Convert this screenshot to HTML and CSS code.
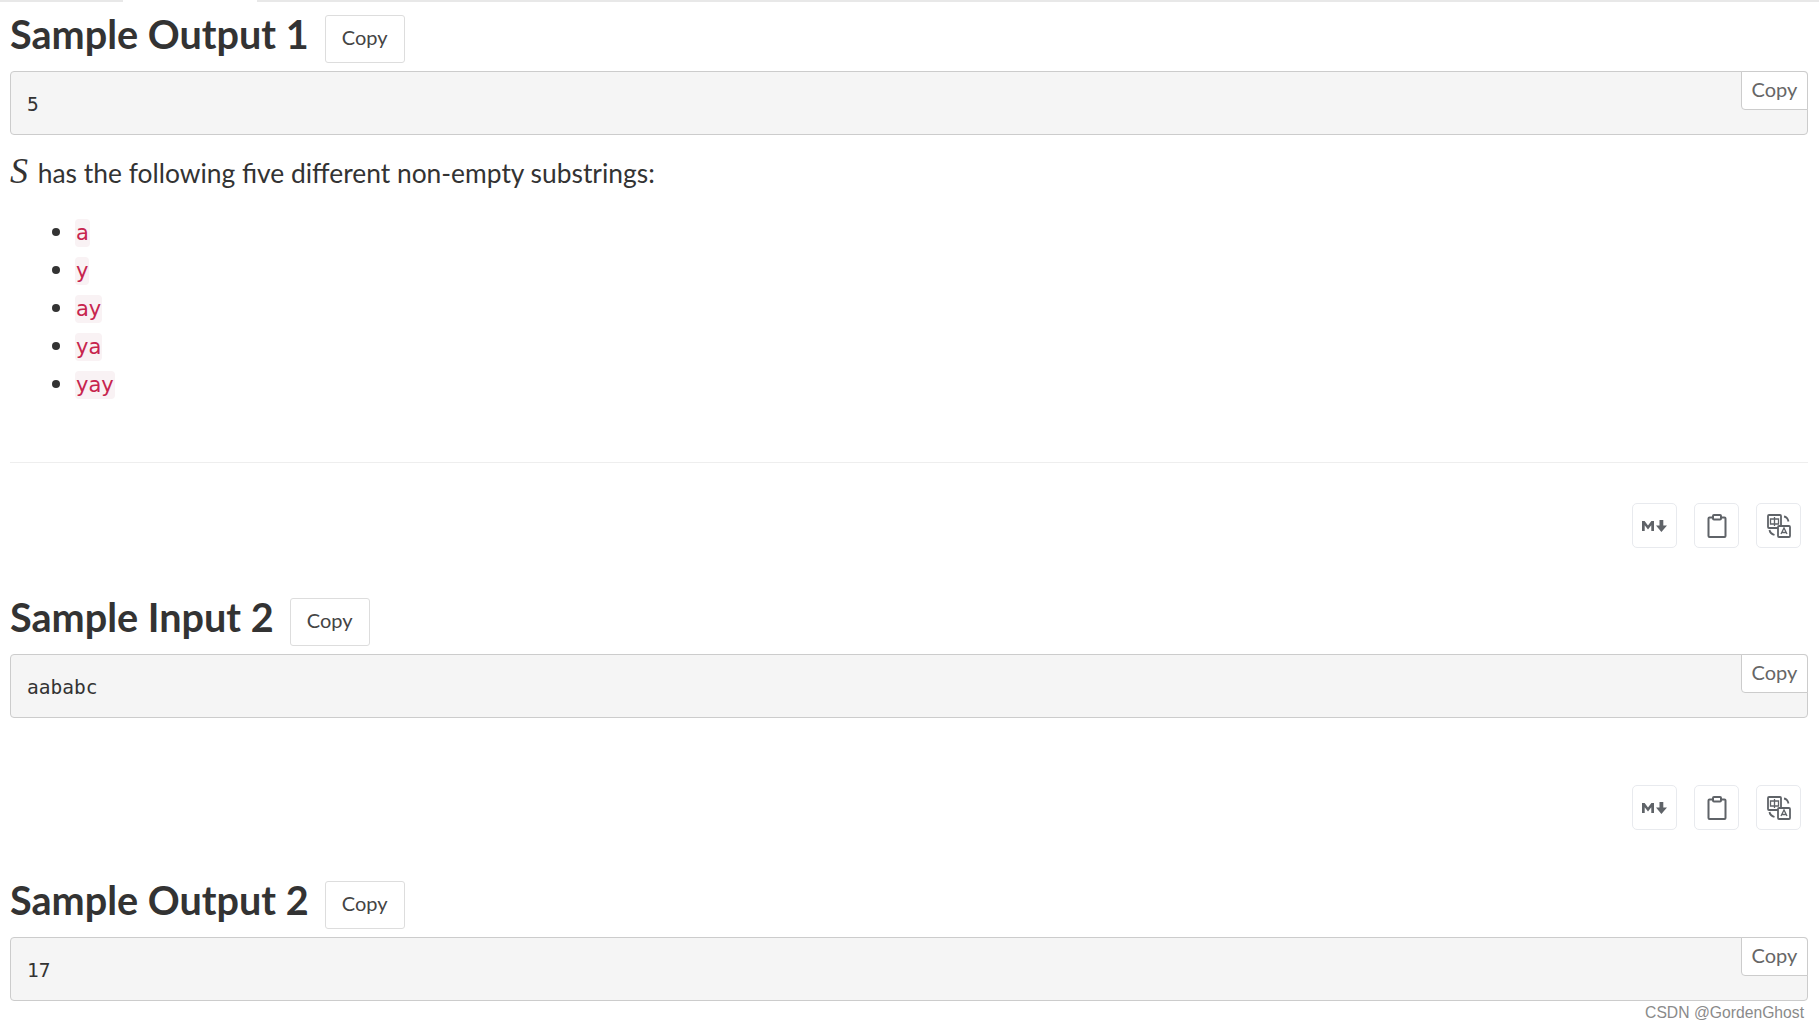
FILE: index.html
```html
<!DOCTYPE html>
<html lang="en">
<head>
<meta charset="utf-8">
<title>Sample Output</title>
<link rel="stylesheet" href="styles.css">
</head>
<body>
<div class="tabs"><span class="tab-line tab-a"></span><span class="tab-gap"></span><span class="tab-line tab-b"></span></div>
<main class="page">
  <section class="first">
    <div class="head"><h3>Sample Output 1</h3><button class="copy">Copy</button></div>
    <div class="pre"><code>5</code><button class="corner">Copy</button></div>
    <p class="desc"><i class="math">S</i> has the following five different non-empty substrings:</p>
    <ul class="subs">
      <li><code>a</code></li>
      <li><code>y</code></li>
      <li><code>ay</code></li>
      <li><code>ya</code></li>
      <li><code>yay</code></li>
    </ul>
    <hr class="rule">
  </section>
  <div class="tools tools-a">
    <span class="tool"><svg width="26" height="14" viewBox="0 0 26 14"><path class="fill" d="M0 12V2h2.600L6 6.600 9.400 2H12v10H9.300V6.200L6 10.600 2.700 6.200V12zM17.500 1h3.800v5.500H25L19.400 13 14 6.500h3.500z"/></svg></span>
    <span class="tool"><svg width="20" height="24" viewBox="0 0 20 24"><path class="line" d="M6 3.500H2.500a1 1 0 0 0-1 1V22a1 1 0 0 0 1 1h15a1 1 0 0 0 1-1V4.500a1 1 0 0 0-1-1H14"/><rect class="line" x="6" y="1" width="8" height="4.500" rx="1"/></svg></span>
    <span class="tool"><svg width="24" height="24" viewBox="0 0 24 24"><path class="thin" d="M17 2.500q3.500 .5 4.500 5M2.500 16q.5 3.500 5 5"/><rect class="thin" x="1" y="1" width="13" height="13" rx="1"/><rect class="thin" x="11" y="12" width="12" height="11" rx="1"/><path class="hair" d="M3.500 5h8v5h-8zM7.500 3v9"/><path class="hair" d="M14 20l3-6 3 6M15 18.500h4"/></svg></span>
  </div>
  <section class="block block-input">
    <div class="head"><h3>Sample Input 2</h3><button class="copy">Copy</button></div>
    <div class="pre"><code>aababc</code><button class="corner">Copy</button></div>
  </section>
  <div class="tools tools-b">
    <span class="tool"><svg width="26" height="14" viewBox="0 0 26 14"><path class="fill" d="M0 12V2h2.600L6 6.600 9.400 2H12v10H9.300V6.200L6 10.600 2.700 6.200V12zM17.500 1h3.800v5.500H25L19.400 13 14 6.500h3.500z"/></svg></span>
    <span class="tool"><svg width="20" height="24" viewBox="0 0 20 24"><path class="line" d="M6 3.500H2.500a1 1 0 0 0-1 1V22a1 1 0 0 0 1 1h15a1 1 0 0 0 1-1V4.500a1 1 0 0 0-1-1H14"/><rect class="line" x="6" y="1" width="8" height="4.500" rx="1"/></svg></span>
    <span class="tool"><svg width="24" height="24" viewBox="0 0 24 24"><path class="thin" d="M17 2.500q3.500 .5 4.500 5M2.500 16q.5 3.500 5 5"/><rect class="thin" x="1" y="1" width="13" height="13" rx="1"/><rect class="thin" x="11" y="12" width="12" height="11" rx="1"/><path class="hair" d="M3.500 5h8v5h-8zM7.500 3v9"/><path class="hair" d="M14 20l3-6 3 6M15 18.500h4"/></svg></span>
  </div>
  <section class="block block-output">
    <div class="head"><h3>Sample Output 2</h3><button class="copy">Copy</button></div>
    <div class="pre"><code>17</code><button class="corner">Copy</button></div>
  </section>
  <div class="mark">CSDN @GordenGhost</div>
</main>
</body>
</html>
```
FILE: styles.css
```css
* { box-sizing: border-box; }
html, body { margin: 0; background: #fff; }
body { height: 1029px; overflow: hidden; color: #333; font-family: Lato, "Liberation Sans", sans-serif; }
.tabs { display: flex; height: 2px; }
.tab-line { background: #e8e8e8; }
.tab-a { width: 123px; }
.tab-gap { width: 134px; }
.tab-b { flex: 1; }
.page { padding: 0 11px 0 10px; }
.first { padding-top: 13px; }
.head { display: flex; align-items: center; height: 48px; margin-bottom: 8px; }
h3 { margin: 0 16px 0 0; font-size: 39.600px; line-height: 48px; font-weight: 700; color: #333; position: relative; top: -5px; }
.copy { width: 80px; height: 48px; padding: 0 0 4px; background: #fff; border: 1px solid #ddd; border-radius: 3px; color: #444; font: 20px Lato, sans-serif; }
.pre { display: flex; align-items: center; position: relative; height: 64px; padding: 2px 0 0 16px; background: #f5f5f5; border: 1px solid #ccc; border-radius: 4px; color: #333; }
.pre code { font: 19.500px "DejaVu Sans Mono", monospace; }
.corner { position: absolute; top: -1px; right: -1px; width: 67px; height: 39px; padding: 0 0 4px; background: #fff; border: 1px solid #ccc; border-radius: 0 4px 0 4px; color: #666; font: 20px Lato, sans-serif; }
.desc { margin: 15px 0 0; font-size: 26.400px; line-height: 38px; color: #333; }
.math { font: italic 36px "Liberation Serif", serif; margin-right: 3px; }
.subs { margin: 19px 0 0; padding: 0 0 0 65px; font-size: 25px; }
.subs li { height: 38px; line-height: 38px; }
.subs code { padding: 2px 1px; background: #f9f2f4; border-radius: 4px; color: #c7254e; font: 21px "DejaVu Sans", sans-serif; }
.rule { height: 1px; margin: 61px 0 0; border: 0; background: #eee; }
.tools { display: flex; justify-content: flex-end; gap: 17px; padding-right: 7px; }
.tools-a { margin-top: 40px; }
.tools-b { margin-top: 67px; }
.tool { display: flex; align-items: center; justify-content: center; width: 45px; height: 45px; border: 1px solid #e8eaee; border-radius: 5px; }
.fill { fill: #5f6368; }
.line { fill: none; stroke: #5f6368; stroke-width: 2; }
.thin { fill: #fff; stroke: #5f6368; stroke-width: 1.800; }
.hair { fill: none; stroke: #5f6368; stroke-width: 1.300; }
.block-input { margin-top: 50px; }
.block-output { margin-top: 51px; }
.mark { margin: 3px 4px 0 0; text-align: right; font: 15.700px "Liberation Sans", sans-serif; color: #8a8a8a; white-space: nowrap; }
```
